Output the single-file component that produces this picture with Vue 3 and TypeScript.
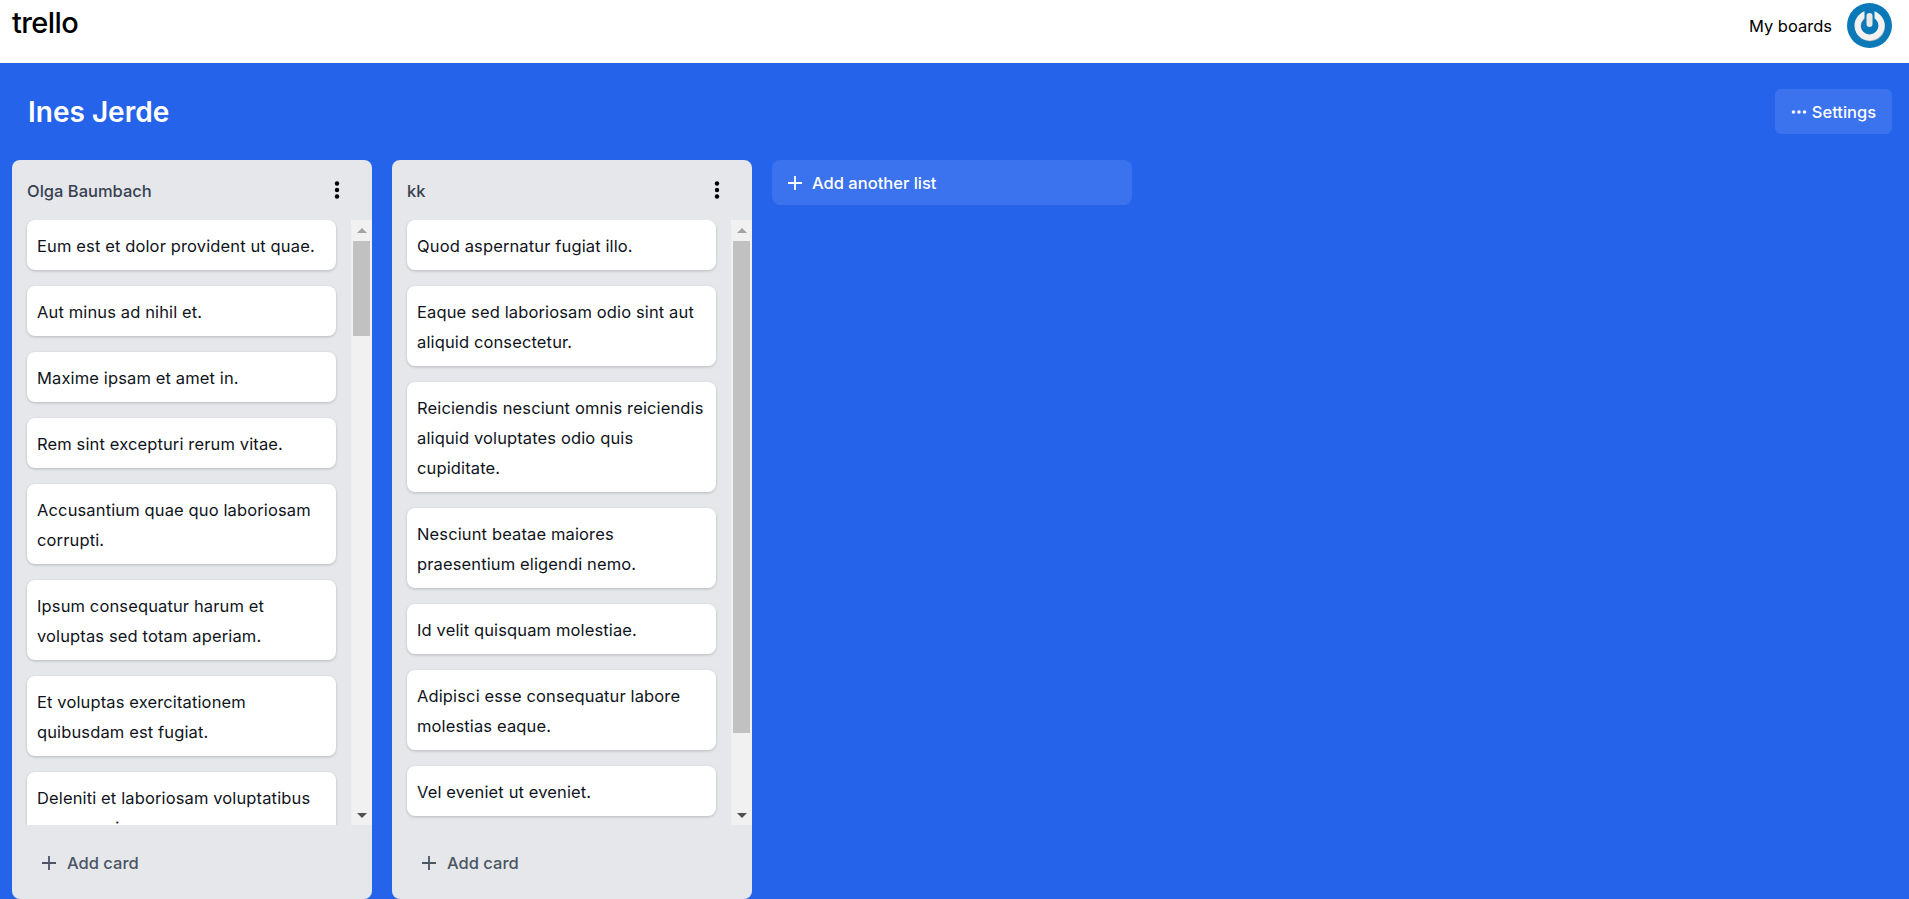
<template>
  <div class="page">
    <header class="topbar">
      <a class="logo">trello</a>
      <div class="user">
        <span class="my-boards">My boards</span>
        <svg class="avatar" viewBox="0 0 45 45" width="45" height="45">
          <circle cx="22.5" cy="22.5" r="22.5" fill="#0b79b8" />
          <circle cx="23" cy="23.2" r="12" fill="none" stroke="#bdbdbd" stroke-width="6" />
          <circle cx="22.5" cy="22.5" r="12" fill="none" stroke="#f2f2f2" stroke-width="6" />
          <rect x="17.5" y="3" width="10" height="14" fill="#0b79b8" />
          <rect x="19.5" y="10" width="6" height="14" rx="3" fill="#e8e8e8" />
        </svg>
      </div>
    </header>
    <main class="board">
      <div class="board-head">
        <h1>Ines Jerde</h1>
        <button type="button" class="settings">
          <svg viewBox="0 0 16 4" width="16" height="4">
            <circle cx="2.5" cy="2" r="1.8" />
            <circle cx="8" cy="2" r="1.8" />
            <circle cx="13.5" cy="2" r="1.8" />
          </svg>
          Settings
        </button>
      </div>
      <div class="lists">
        <section v-for="list in lists" :key="list.title" class="list">
          <div class="list-head">
            <h2>{{ list.title }}</h2>
            <svg viewBox="0 0 6 20" width="6" height="20">
              <circle cx="3" cy="3.5" r="2.2" />
              <circle cx="3" cy="10" r="2.2" />
              <circle cx="3" cy="16.5" r="2.2" />
            </svg>
          </div>
          <div class="list-body">
            <div class="cards">
              <div v-for="card in list.cards" :key="card" class="card">{{ card }}</div>
            </div>
            <div class="scrollbar">
              <span class="arrow up"></span>
              <div class="thumb-track">
                <div class="thumb" :style="{ height: list.thumb + 'px' }"></div>
              </div>
              <span class="arrow down"></span>
            </div>
          </div>
          <div class="add-card">
            <svg viewBox="0 0 16 16" width="16" height="16"><path d="M8 1v14M1 8h14" /></svg>
            Add card
          </div>
        </section>
        <div class="add-list">
          <svg viewBox="0 0 16 16" width="16" height="16"><path d="M8 1v14M1 8h14" /></svg>
          Add another list
        </div>
      </div>
    </main>
  </div>
</template>

<script setup lang="ts">
interface List {
  title: string
  thumb: number
  cards: string[]
}

const lists: List[] = [
  {
    title: 'Olga Baumbach',
    thumb: 95,
    cards: [
      'Eum est et dolor provident ut quae.',
      'Aut minus ad nihil et.',
      'Maxime ipsam et amet in.',
      'Rem sint excepturi rerum vitae.',
      'Accusantium quae quo laboriosam corrupti.',
      'Ipsum consequatur harum et voluptas sed totam aperiam.',
      'Et voluptas exercitationem quibusdam est fugiat.',
      'Deleniti et laboriosam voluptatibus quos omnis.',
    ],
  },
  {
    title: 'kk',
    thumb: 492,
    cards: [
      'Quod aspernatur fugiat illo.',
      'Eaque sed laboriosam odio sint aut aliquid consectetur.',
      'Reiciendis nesciunt omnis reiciendis aliquid voluptates odio quis cupiditate.',
      'Nesciunt beatae maiores praesentium eligendi nemo.',
      'Id velit quisquam molestiae.',
      'Adipisci esse consequatur labore molestias eaque.',
      'Vel eveniet ut eveniet.',
    ],
  },
]
</script>

<style>
html,
body {
  margin: 0;
  height: 100%;
  overflow: hidden;
}
</style>

<style scoped>
.page {
  height: 899px;
  display: flex;
  flex-direction: column;
  font-family: Inter, "Liberation Sans", sans-serif;
  color: #111827;
}

.topbar {
  height: 63px;
  flex-shrink: 0;
  background: #fff;
  display: flex;
  justify-content: space-between;
  padding: 0 17px 0 12px;
  box-sizing: border-box;
}

.logo {
  font-size: 29px;
  font-weight: 500;
  line-height: 46px;
  letter-spacing: -0.6px;
  color: #000;
}

.user {
  display: flex;
  align-items: center;
  gap: 15px;
  height: 50px;
}

.my-boards {
  font-size: 16.5px;
  color: #000;
  margin-top: 2px;
}

.board {
  flex: 1;
  min-height: 0;
  background: #2563eb;
  display: flex;
  flex-direction: column;
}

.board-head {
  height: 97px;
  flex-shrink: 0;
  display: flex;
  justify-content: space-between;
  align-items: center;
  padding: 0 17px 0 28px;
  box-sizing: border-box;
}

h1 {
  margin: 0;
  font-size: 28px;
  font-weight: 600;
  color: #fff;
}

.settings {
  width: 117px;
  height: 45px;
  border: 0;
  border-radius: 6px;
  background: rgba(255, 255, 255, 0.1);
  color: #fff;
  font: 500 16.5px Inter, "Liberation Sans", sans-serif;
  padding: 0;
  display: flex;
  align-items: center;
  justify-content: center;
  gap: 5px;
}

.settings svg {
  fill: #fff;
}

.lists {
  flex: 1;
  min-height: 0;
  display: flex;
  align-items: flex-start;
  gap: 20px;
  padding-left: 12px;
}

.list {
  width: 360px;
  height: 739px;
  background: #e5e7eb;
  border-radius: 8px;
  display: flex;
  flex-direction: column;
}

.list-head {
  height: 60px;
  flex-shrink: 0;
  display: flex;
  justify-content: space-between;
  align-items: center;
  padding: 0 32px 0 15px;
}

h2 {
  margin: 2px 0 0;
  font-size: 16.5px;
  font-weight: 500;
  color: #374151;
}

.list-head svg {
  fill: #000;
}

.list-body {
  height: 605px;
  flex-shrink: 0;
  display: flex;
  justify-content: space-between;
  overflow: hidden;
}

.cards {
  width: 309px;
  margin-left: 15px;
  display: flex;
  flex-direction: column;
  gap: 16px;
}

.card {
  flex-shrink: 0;
  background: #fff;
  border-radius: 8px;
  padding: 11px 10px 9px;
  font-size: 16.5px;
  letter-spacing: 0.13px;
  line-height: 30px;
  color: #0f1420;
  box-shadow: 0 1px 3px rgba(0, 0, 0, 0.2);
}

.scrollbar {
  width: 21px;
  flex-shrink: 0;
  background: #f1f1f1;
  display: flex;
  flex-direction: column;
  align-items: center;
}

.thumb-track {
  flex: 1;
  width: 17px;
}

.thumb {
  background: #c1c1c1;
}

.arrow {
  width: 0;
  height: 0;
  flex-shrink: 0;
  border-left: 5px solid transparent;
  border-right: 5px solid transparent;
}

.arrow.up {
  margin: 8px 0 8px;
  border-bottom: 5px solid #a3a3a3;
}

.arrow.down {
  margin: 8px 0 7px;
  border-top: 5px solid #505050;
}

.add-card {
  flex: 1;
  display: flex;
  align-items: center;
  gap: 10px;
  padding: 2px 0 0 29px;
  font-size: 16.5px;
  font-weight: 500;
  color: #4b5563;
}

.add-card svg {
  stroke: #4b5563;
  stroke-width: 1.8;
  fill: none;
}

.add-list {
  width: 360px;
  height: 45px;
  box-sizing: border-box;
  border-radius: 8px;
  background: rgba(255, 255, 255, 0.1);
  display: flex;
  align-items: center;
  gap: 9px;
  padding-left: 15px;
  color: #fff;
  font-size: 16.5px;
  font-weight: 500;
}

.add-list svg {
  stroke: #fff;
  stroke-width: 1.8;
  fill: none;
}
</style>
